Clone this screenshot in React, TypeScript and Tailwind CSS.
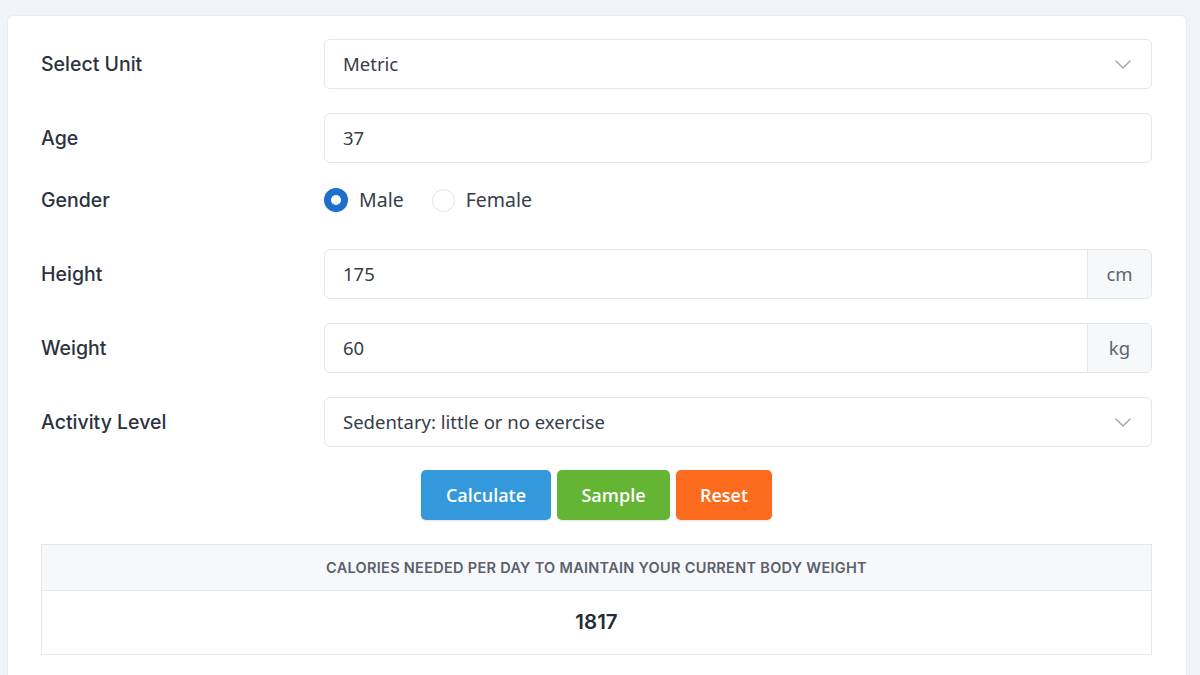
const labelFont = { fontFamily: 'Inter, "Noto Sans", sans-serif' };

const Chevron = () => (
  <svg width="16" height="9" viewBox="0 0 16 9" fill="none" stroke="#a3a8b0" strokeWidth="1.5" strokeLinecap="round" strokeLinejoin="round">
    <path d="M1 1l7 7 7-7" />
  </svg>
);

const Label = ({ children }: { children: string }) => (
  <div className="w-[283px] shrink-0 pt-[1px] text-[19.5px] font-medium text-[#2b3240]">{children}</div>
);

const Field = ({ value, addon, select }: { value: string; addon?: string; select?: boolean }) => (
  <div className="flex-1 flex h-[50px] border border-[#e3e6eb] rounded-[6px] bg-white overflow-hidden font-['Noto_Sans',sans-serif] text-[18.5px] text-[#363c48]">
    <div className="flex-1 flex items-center px-[18px]">{value}</div>
    {select && (
      <div className="flex items-center pr-[20px]">
        <Chevron />
      </div>
    )}
    {addon && (
      <div className="w-[64px] flex items-center justify-center border-l border-[#e3e6eb] bg-[#f7f8fa] text-[#5d6470]">
        {addon}
      </div>
    )}
  </div>
);

export default function App() {
  return (
    <div className="bg-[#f0f3f8] pt-[15px] pl-[7px] pr-[13px] overflow-hidden h-[675px]" style={labelFont}>
      <div className="bg-white rounded-[6px] border border-[#e8ebf0] pt-[23px] pl-[33px] pr-[34px] pb-[40px]">
        <div className="flex items-center mb-6">
          <Label>Select Unit</Label>
          <Field value="Metric" select />
        </div>
        <div className="flex items-center">
          <Label>Age</Label>
          <Field value="37" />
        </div>
        <div className="flex items-center h-[50px] mt-3 mb-6">
          <Label>Gender</Label>
          <div className="flex items-center font-['Noto_Sans',sans-serif] text-[19.5px] text-[#363c48]">
            <span className="w-[24px] h-[24px] rounded-full bg-[#1d6fc9] flex items-center justify-center">
              <span className="w-[10px] h-[10px] rounded-full bg-white" />
            </span>
            <span className="ml-[11px]">Male</span>
            <span className="ml-[28px] w-[23px] h-[23px] rounded-full border border-[#dfe2e7] bg-white" />
            <span className="ml-[11px]">Female</span>
          </div>
        </div>
        <div className="flex items-center mb-6">
          <Label>Height</Label>
          <Field value="175" addon="cm" />
        </div>
        <div className="flex items-center mb-6">
          <Label>Weight</Label>
          <Field value="60" addon="kg" />
        </div>
        <div className="flex items-center">
          <Label>Activity Level</Label>
          <Field value="Sedentary: little or no exercise" select />
        </div>
        <div className="flex justify-center gap-[6px] mt-[23px] font-['Open_Sans',sans-serif] font-semibold text-[18px] text-white">
          <button className="w-[130px] h-[50px] rounded-[5px] bg-[#3498dc] shadow-[0_1px_2px_rgba(0,0,0,0.12)]">Calculate</button>
          <button className="w-[113px] h-[50px] rounded-[5px] bg-[#63b533] shadow-[0_1px_2px_rgba(0,0,0,0.12)]">Sample</button>
          <button className="w-[96px] h-[50px] rounded-[5px] bg-[#fd6b1e] shadow-[0_1px_2px_rgba(0,0,0,0.12)]">Reset</button>
        </div>
        <div className="mt-6 border border-[#e5e8ed]">
          <div className="h-[46px] flex items-center justify-center bg-[#f7f8fa] border-b border-[#e5e8ed] text-[14.5px] font-semibold uppercase tracking-[0.02em] text-[#5a606c]">
            Calories needed per day to maintain your current body weight
          </div>
          <div className="h-[63px] flex items-center justify-center text-[20.5px] font-semibold text-[#262b35]">
            1817
          </div>
        </div>
      </div>
    </div>
  );
}
